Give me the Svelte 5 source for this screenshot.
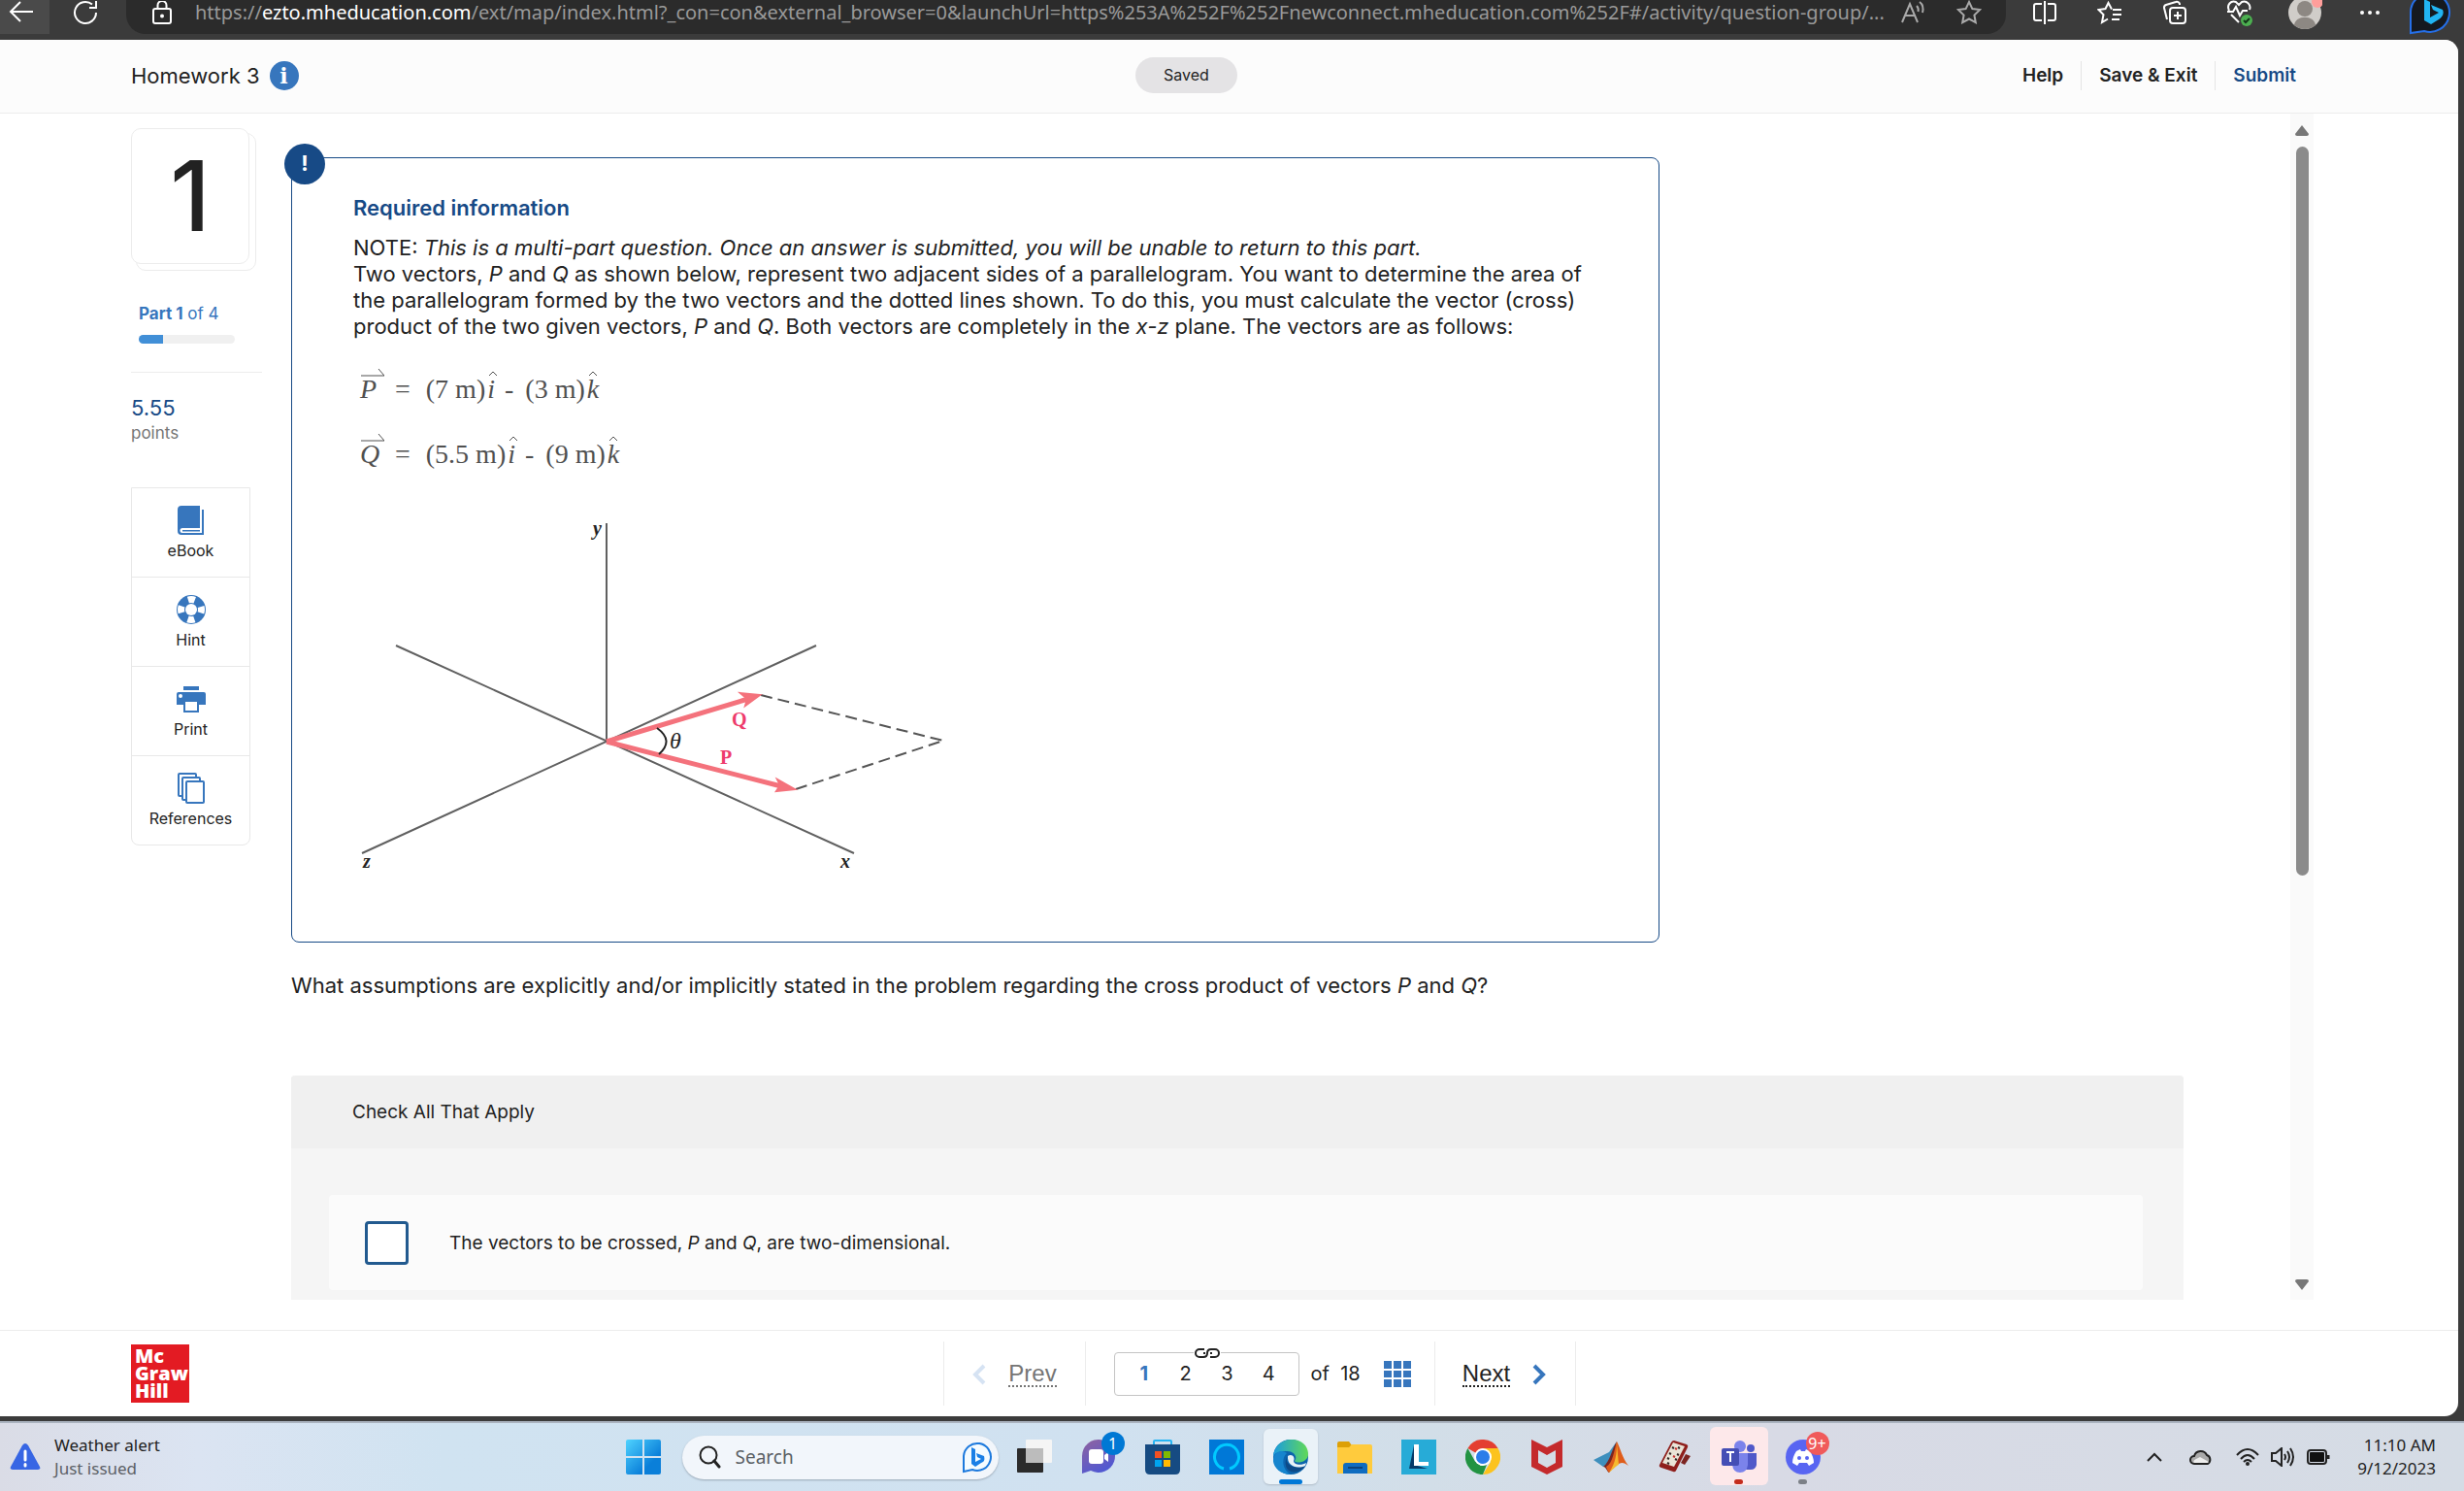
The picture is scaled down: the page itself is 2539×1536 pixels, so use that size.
<script>
    let answerChecked = $state(false);
    let search = $state('');
    let currentPage = $state(1);

    const pages = [1, 2, 3, 4];
    const progress = 25;
</script>

<div class="screen">
    <header class="browser-bar">
        <button class="nav-btn back" aria-label="Back">
            <svg width="26" height="24" viewBox="0 0 26 24"><path d="M25 12H2M12 2 2 12l10 10" /></svg>
        </button>
        <button class="nav-btn" aria-label="Refresh">
            <svg width="26" height="26" viewBox="0 0 26 26"><path d="M24 13A11 11 0 1 1 20 4.500M24 1v7h-7" /></svg>
        </button>
        <div class="address">
            <svg class="lock" width="20" height="24" viewBox="0 0 20 24"><rect x="1" y="8" width="18" height="15" rx="2" /><path d="M5.500 8V4.500a4.500 4.500 0 0 1 9 0V8" /><circle class="dot" cx="10" cy="15.500" r="2" /></svg>
            <a class="url" href="#top">https://<b>ezto.mheducation.com</b>/ext/map/index.html?_con=con&amp;external_browser=0&amp;launchUrl=https%253A%252F%252Fnewconnect.mheducation.com%252F#/activity/question-group/...</a>
            <button class="address-btn" aria-label="Read aloud">
                <svg width="26" height="24" viewBox="0 0 26 24"><path d="m2 22 8-19 8 19M5 15h10M17 5c2 2 2 4 1.500 6M20 1c4 3 4 7 3 11" /></svg>
            </button>
            <button class="address-btn" aria-label="Favorite">
                <svg width="26" height="25" viewBox="0 0 26 25"><path d="m13 2 3.400 7.100 7.600 1-5.600 5.400 1.400 7.700-6.800-3.700-6.800 3.700 1.400-7.700L2 10.100l7.600-1z" /></svg>
            </button>
        </div>
        <div class="browser-tools">
            <button aria-label="Split screen"><svg width="26" height="26" viewBox="0 0 26 26"><path d="M10 4H4a2 2 0 0 0-2 2v13a2 2 0 0 0 2 2h6M16 4h6a2 2 0 0 1 2 2v13a2 2 0 0 1-2 2h-6M13 1v24" /></svg></button>
            <button aria-label="Favorites"><svg width="26" height="26" viewBox="0 0 26 26"><path d="M15 9.500 11.500 3 8.500 9l-7 1 5 5-1.500 8 6-3.500M16 10h9M16 15h9M15 20h8" /></svg></button>
            <button aria-label="Collections"><svg width="26" height="26" viewBox="0 0 26 26"><rect x="8" y="8" width="16" height="16" rx="3" /><path d="M5 20 2 8a3 3 0 0 1 2-3l10-3a3 3 0 0 1 4 2v1M16 12v8M12 16h8" /></svg></button>
            <button aria-label="Browser essentials"><svg width="28" height="28" viewBox="0 0 28 28"><path d="M3 12C0 6 5 1 10 3l3 3 3-3c5-2 10 3 8 8M1 13h6l3-5 4 9 3-5h5M5 16l8 8" /><circle cx="21" cy="22" r="6" fill="#4caf50" stroke="none" /><path d="m18 22 2 2 4-4" stroke="#14351a" /></svg></button>
            <button aria-label="Profile"><svg width="36" height="36" viewBox="0 0 36 36"><circle cx="18" cy="18" r="17" fill="#d0cdc9" stroke="none" /><circle cx="18" cy="14" r="8" fill="#8d8883" stroke="none" /><path d="M7 31c1-11 21-11 22 0a17 17 0 0 1-22 0" fill="#8d8883" stroke="none" /><circle cx="31" cy="7" r="6" fill="#ff9e9b" stroke="none" /></svg></button>
            <button aria-label="More"><svg width="24" height="8" viewBox="0 0 24 8"><g fill="#fff" stroke="none"><circle cx="4" cy="4" r="2" /><circle cx="12" cy="4" r="2" /><circle cx="20" cy="4" r="2" /></g></svg></button>
            <button aria-label="Bing chat">
                <svg width="46" height="46" viewBox="0 0 46 46"><path d="M3 44V22a20 20 0 1 1 14 20z" fill="#15191f" stroke="#256fe8" /><path d="M17 9l6 3v16l9-5-6-3-2-5 12 5c2 5-1 8-4 10l-8 5-7-4z" fill="#21b4f2" stroke="none" /></svg>
            </button>
        </div>
    </header>

    <div class="page">
        <header class="assignment-bar">
            <div class="assignment-title">
                Homework 3
                <button class="info" aria-label="Assignment information">i</button>
            </div>
            <span class="saved">Saved</span>
            <nav class="actions">
                <a href="#help">Help</a>
                <a href="#save">Save &amp; Exit</a>
                <a class="submit" href="#submit">Submit</a>
            </nav>
        </header>

        <div class="workspace">
            <aside class="sidebar">
                <div class="stack"><div class="number">1</div></div>
                <div class="part">
                    <div class="part-label"><b>Part 1</b> of 4</div>
                    <div class="track"><div class="fill" style="width: {progress}%"></div></div>
                </div>
                <div class="points">
                    <strong>5.55</strong>
                    <span>points</span>
                </div>
                <div class="tools">
                    <button>
                        <svg width="30" height="32" viewBox="0 0 30 32"><path d="M5 1h19v23H6a2 2 0 0 0 0 5h20V5h2v26H5a4 4 0 0 1-4-4V5a4 4 0 0 1 4-4" /><path d="M6 26h18v1.500H6z" /></svg>
                        eBook
                    </button>
                    <button>
                        <svg width="32" height="32" viewBox="0 0 32 32"><circle cx="16" cy="16" r="15" /><circle cx="16" cy="16" r="10.500" fill="none" stroke="#fff" stroke-width="7" stroke-dasharray="7 9.490" stroke-dashoffset="3.500" /><circle cx="16" cy="16" r="6" fill="#fff" /></svg>
                        Hint
                    </button>
                    <button>
                        <svg width="32" height="32" viewBox="0 0 32 32"><path d="M8 3h16v4H8zM3 9h26a2 2 0 0 1 2 2v11h-7v8H8v-8H1V11a2 2 0 0 1 2-2" /><path d="M10 19h12v9H10z" fill="#fff" /><circle cx="5" cy="13" r="2" fill="#fff" /></svg>
                        Print
                    </button>
                    <button>
                        <svg width="30" height="32" viewBox="0 0 30 32"><g fill="#fff" stroke="#3776bd" stroke-width="2"><rect x="2" y="1" width="18" height="23" rx="1" /><rect x="6" y="5" width="18" height="23" rx="1" /><rect x="10" y="9" width="18" height="22" rx="1" /></g></svg>
                        References
                    </button>
                </div>
            </aside>

            <main class="content">
                <section class="required">
                    <span class="alert">!</span>
                    <h2>Required information</h2>
                    <p>
                        NOTE: <i>This is a multi-part question. Once an answer is submitted, you will be unable to return to this part.</i><br />
                        Two vectors, <i>P</i> and <i>Q</i> as shown below, represent two adjacent sides of a parallelogram. You want to determine the area of<br />
                        the parallelogram formed by the two vectors and the dotted lines shown. To do this, you must calculate the vector (cross)<br />
                        product of the two given vectors, <i>P</i> and <i>Q</i>. Both vectors are completely in the <i>x-z</i> plane. The vectors are as follows:
                    </p>

                    {#snippet vector(name)}
                        <span class="vector"><svg width="24" height="9" viewBox="0 0 24 9"><path d="M0 8h24l-6-7" /></svg><i>{name}</i></span>
                    {/snippet}
                    {#snippet unit(name)}
                        <span class="unit"><svg width="10" height="6" viewBox="0 0 10 6"><path d="m1 5 4-4 4 4" /></svg><i>{name}</i></span>
                    {/snippet}

                    <div class="formula">
                        {@render vector('P')}<span class="equals">=</span><span>(7 m)</span>{@render unit('i')}<span class="minus">-</span><span>(3 m)</span>{@render unit('k')}
                    </div>
                    <div class="formula">
                        {@render vector('Q')}<span class="equals">=</span><span>(5.5 m)</span>{@render unit('i')}<span class="minus">-</span><span>(9 m)</span>{@render unit('k')}
                    </div>

                    <svg class="diagram" width="640" height="380" viewBox="0 0 640 380" role="img" aria-label="Vectors P and Q in the x-z plane">
                        <g class="axes">
                            <path d="M261 15v225M44 141l472 214M477 141 9 355" />
                        </g>
                        <g class="dashed">
                            <path d="m420 192 188 47" />
                            <path d="m456 289 152-50" />
                        </g>
                        <g class="vectors">
                            <path d="m261 240 146-44M261 240l180 46" />
                        </g>
                        <g class="heads">
                            <path d="m419 192-20-2 7 6-2 7zM455 289l-18-10 3 6-4 6z" />
                        </g>
                        <path class="arc" d="M313 226q18 13 2 27" />
                        <g class="axis-names">
                            <text x="247" y="27">y</text>
                            <text x="10" y="370">z</text>
                            <text x="502" y="370">x</text>
                        </g>
                        <g class="vector-names">
                            <text x="390" y="224">Q</text>
                            <text x="378" y="263">P</text>
                        </g>
                        <text class="theta" x="326" y="247">θ</text>
                    </svg>
                </section>

                <p class="question">What assumptions are explicitly and/or implicitly stated in the problem regarding the cross product of vectors <i>P</i> and <i>Q</i>?</p>

                <section class="answers">
                    <h3>Check All That Apply</h3>
                    <div class="options">
                        <label>
                            <input type="checkbox" bind:checked={answerChecked} />
                            <span>The vectors to be crossed, <i>P</i> and <i>Q</i>, are two-dimensional.</span>
                        </label>
                    </div>
                </section>
            </main>

            <div class="scrollbar">
                <button aria-label="Scroll up"><svg width="14" height="11" viewBox="0 0 14 11"><path d="M7 0 14 9q0 2-2 2H2q-2 0-2-2z" /></svg></button>
                <div class="rail"><div class="thumb"></div></div>
                <button aria-label="Scroll down"><svg width="14" height="11" viewBox="0 0 14 11"><path d="M7 11 14 2q0-2-2-2H2Q0 0 0 2z" /></svg></button>
            </div>
        </div>

        <footer class="pager">
            <div class="logo">Mc<br />Graw<br />Hill</div>
            <nav class="pager-nav">
                <a class="step prev" href="#prev">
                    <svg width="16" height="22" viewBox="0 0 16 22"><path d="m13 2-9 9 9 9" /></svg>
                    <span>Prev</span>
                </a>
                <div class="pages">
                    <div class="page-group">
                        <svg class="link" width="28" height="12" viewBox="0 0 28 12"><path d="M11 2H6a4 4 0 0 0 0 8h4q4 0 4-4t4-4h4a4 4 0 0 1 0 8h-5M10 6h2M17 6h2" /></svg>
                        {#each pages as page}
                            <button class:current={page === currentPage} onclick={() => (currentPage = page)}>{page}</button>
                        {/each}
                    </div>
                    <span class="total">of &nbsp;18</span>
                    <button class="grid-btn" aria-label="All questions">
                        <svg width="28" height="27" viewBox="0 0 28 27"><path d="M0 0h8v8H0zM10 0h8v8h-8zM20 0h8v8h-8zM0 10h8v7H0zM10 10h8v7h-8zM20 10h8v7h-8zM0 19h8v8H0zM10 19h8v8h-8zM20 19h8v8h-8z" /></svg>
                    </button>
                </div>
                <a class="step next" href="#next">
                    <span>Next</span>
                    <svg width="16" height="22" viewBox="0 0 16 22"><path d="m3 2 9 9-9 9" /></svg>
                </a>
            </nav>
        </footer>
    </div>

    <footer class="taskbar">
        <button class="weather">
            <svg width="32" height="30" viewBox="0 0 32 30"><path d="M13 3q3-4 6 0l12 22q1 3-2 3H3q-3 0-2-3z" fill="#3766e4" /><path d="M16 9v9M16 22.500v1.500" stroke="#fff" stroke-width="3" stroke-linecap="round" /></svg>
            <span class="weather-text"><span>Weather alert</span><small>Just issued</small></span>
        </button>

        <div class="apps">
            <button class="app" aria-label="Start">
                <svg width="36" height="36" viewBox="0 0 36 36"><defs><linearGradient id="win" x2="1" y2="1"><stop stop-color="#4fd3ff" /><stop offset="0.700" stop-color="#0a7fd9" /></linearGradient></defs><path d="M0 2q0-2 2-2h15v17H0zM19 0h15q2 0 2 2v15H19zM0 19h17v17H2q-2 0-2-2zM19 19h17v15q0 2-2 2H19z" fill="url(#win)" /></svg>
            </button>
            <label class="search">
                <svg width="24" height="24" viewBox="0 0 24 24"><circle cx="11" cy="10" r="8.500" fill="none" stroke="#222" stroke-width="2" /><path d="m17 16 5 6" stroke="#222" stroke-width="3" stroke-linecap="round" /></svg>
                <input type="text" aria-label="Search" placeholder="Search" bind:value={search} />
                <svg width="32" height="38" viewBox="0 0 32 38"><path d="M2 34V18a14 14 0 1 1 9 14z" fill="#f4fbff" stroke="#1c79dd" stroke-width="2" /><path d="m10 9 4 2v13l6-3-4-2-1-4 8 3c1 4 0 6-3 7l-6 4-4-3z" fill="#1a7fe6" /></svg>
            </label>
            <button class="app" aria-label="Task view">
                <svg width="36" height="36" viewBox="0 0 36 36"><rect y="9" width="27" height="25" rx="1" fill="#2b2b2b" /><rect x="9" width="27" height="24" rx="1" fill="#f5f5f5" /><path d="M9 9h18v15H9z" fill="#bcbcbc" /></svg>
            </button>
            <button class="app" aria-label="Chat, 1 new">
                <svg width="36" height="36" viewBox="0 0 36 36"><defs><linearGradient id="chat" y2="1" x2="0.500"><stop stop-color="#91639f" /><stop offset="1" stop-color="#5058d2" /></linearGradient></defs><path d="M1 35V17a17 17 0 1 1 9 15z" fill="url(#chat)" /><rect x="8" y="10" width="15" height="15" rx="3" fill="#fff" /><path d="m24 16 4-3v10l-4-3z" fill="#fff" /></svg>
                <span class="badge blue">1</span>
            </button>
            <button class="app" aria-label="Store">
                <svg width="36" height="36" viewBox="0 0 36 36"><path d="M9 6V2q0-1 1-1h16q1 0 1 1v4" fill="none" stroke="#26b5f5" stroke-width="2" /><path d="M0 5h36v26q0 5-5 5H5q-5 0-5-5z" fill="#164b82" /><path d="M10 12h7v7h-7z" fill="#f25022" /><path d="M19 12h7v7h-7z" fill="#7fba00" /><path d="M10 21h7v7h-7z" fill="#00a4ef" /><path d="M19 21h7v7h-7z" fill="#ffb900" /></svg>
            </button>
            <button class="app" aria-label="Alexa">
                <svg width="36" height="36" viewBox="0 0 36 36"><path d="M0 0h36v36H0z" fill="#0078d7" /><path d="M15 30a12.500 12.500 0 1 1 6 0" fill="none" stroke="#00caff" stroke-width="3" /></svg>
            </button>
            <button class="app" aria-label="Microsoft Edge">
                <span class="tile"></span>
                <svg width="36" height="36" viewBox="0 0 36 36"><defs><linearGradient id="edge" x2="1"><stop stop-color="#199be0" /><stop offset="1" stop-color="#62d957" /></linearGradient></defs><circle cx="18" cy="18" r="18" fill="#0c64ad" /><path d="M0 18C1-6 36-5 36 15c0 9-13 10-14 7 4-5-2-11-9-10-7 0-12 2-13 6" fill="url(#edge)" /><path d="M14 14c-5 4-6 16 4 22C5 36-3 25 1 17c3-6 9-6 13-3" fill="#1685ce" /><path d="M14 18c-2 8 7 13 19 9-5 8-18 9-20 0-1-4 0-7 1-9" fill="#0d4a87" /><path d="M15 17c4-3 8 1 6 5 0 4 8 5 13 2l-1 3c-9 4-19 0-18-10" fill="#e9f2f7" /></svg>
                <span class="mark active"></span>
            </button>
            <button class="app" aria-label="File Explorer">
                <svg width="36" height="36" viewBox="0 0 36 36"><path d="M0 4q0-2 2-2h10l3 4h15v9H0z" fill="#dda007" /><path d="M0 8h12l3-3h19q2 0 2 2v28H0z" fill="#ffcb3d" /><path d="M6 35V27q0-3 3-3h19q3 0 3 3v8z" fill="#0f6cc0" /><path d="M11 29h15" stroke="#0a437c" stroke-width="2" /></svg>
            </button>
            <button class="app" aria-label="LockDown Browser">
                <svg width="36" height="36" viewBox="0 0 36 36"><path d="M0 0h36v36H0z" fill="#27abd7" /><path d="m13 6-5 24h19l-14-4z" fill="#063a68" /><path d="M13 5h5v18h10v4H13z" fill="#fff" /></svg>
            </button>
            <button class="app" aria-label="Google Chrome">
                <svg width="36" height="36" viewBox="0 0 36 36"><path d="M18 18 2.400 9A18 18 0 0 1 33.600 9z" fill="#e43e31" /><path d="M18 9h15.600A18 18 0 0 1 18 36l8-13z" fill="#fcc31e" /><path d="M2.400 9 10 22.500 16 27l6-1-4 10A18 18 0 0 1 2.400 9" fill="#229342" /><circle cx="18" cy="18" r="9" fill="#fff" /><circle cx="18" cy="18" r="7" fill="#2b7de9" /></svg>
            </button>
            <button class="app" aria-label="McAfee">
                <svg width="32" height="36" viewBox="0 0 32 36"><path d="m0 0 16 8L32 0v28l-16 8-16-8zM7 11v13l9 5 9-5V11l-9 5z" fill="#c42a2c" fill-rule="evenodd" /></svg>
            </button>
            <button class="app" aria-label="MATLAB">
                <svg width="36" height="36" viewBox="0 0 36 36"><path d="m0 21 10-5 6-3L24 2l-9 24-5 2z" fill="#3e8fbd" /><path d="M24 2c-5 7-7 21-14 26 3 0 4 5 6 6C24 26 22 10 24 2" fill="#7a2621" /><path d="M24 2c3 5 6 18 12 25-7-6-11-3-20 7-2-2-2-4-3-6 7-4 8-16 11-26" fill="#df5d1b" /><path d="M24 4c0 10-1 20-8 30 3-2 7-7 10-8z" fill="#f6b92d" /></svg>
            </button>
            <button class="app" aria-label="Solitaire">
                <svg width="36" height="36" viewBox="0 0 36 36"><path d="m17 1 13 4q2 1 1 3L19 32q-1 2-3 1L4 29q-3-1-2-3L14 3q1-2 3-2" fill="#8f1f1c" /><path d="m16 3 12 4-11 21-12-4z" fill="#eae4d7" /><path d="m15 8 2 1m4-1 2 1m-11 5 2 1m6 0 2 1m-12 3 2 1m6 0 2 1m-10 3 2 1" stroke="#322523" stroke-width="2" /><path d="m18 9 2 1m-4 7 2 1" stroke="#c93230" stroke-width="2" /><path d="m29 15 5 2-6 9-4-2z" fill="#7c2421" /></svg>
            </button>
            <button class="app" aria-label="Microsoft Teams">
                <span class="tile teams"></span>
                <svg width="36" height="36" viewBox="0 0 36 36"><circle cx="19" cy="7" r="6" fill="#7b83eb" /><circle cx="30" cy="9" r="4" fill="#5059c9" /><path d="M25 14h11v12q-1 5-6 5h-5z" fill="#5059c9" /><path d="M11 14h16v12q-1 8-8 8t-8-8z" fill="#7b83eb" /><rect y="9" width="18" height="18" rx="2" fill="#444eb5" /><path d="M5 13h8M9 13v10" stroke="#fff" stroke-width="2" /></svg>
                <span class="mark red"></span>
            </button>
            <button class="app" aria-label="Discord, 9+ new">
                <svg width="36" height="36" viewBox="0 0 36 36"><circle cx="18" cy="18" r="18" fill="#5865f2" /><path d="m11 12 4-2 1 2h4l1-2 4 2q4 6 4 12l-5 3-2-3h-8l-2 3-5-3q0-6 4-12" fill="#fff" /><circle cx="14" cy="19" r="2" fill="#5865f2" /><circle cx="22" cy="19" r="2" fill="#5865f2" /></svg>
                <span class="badge coral">9+</span>
                <span class="mark"></span>
            </button>
        </div>

        <div class="tray">
            <button aria-label="Show hidden icons"><svg width="16" height="10" viewBox="0 0 16 10"><path d="m1 9 7-7 7 7" /></svg></button>
            <button aria-label="OneDrive"><svg width="24" height="18" viewBox="0 0 24 18"><path d="M5 16a4 4 0 0 1 0-8 7 7 0 0 1 13-1 5 5 0 0 1 1 9z" fill="#aaa" /><path d="M5 15q-2-2 2-4l4-2 9 5-1 1z" fill="#eee" stroke="none" /></svg></button>
            <button class="status" aria-label="Network, sound and battery">
                <svg width="24" height="20" viewBox="0 0 24 20"><path d="M1 8q11-12 22 0M5 12q7-8 14 0M8 15q4-4 8 0" /><circle cx="12" cy="17" r="2" fill="#222" stroke="none" /></svg>
                <svg width="25" height="20" viewBox="0 0 25 20"><path d="M1 6h4l6-5v18l-6-5H1zM14 7q2 3 0 6M17 4q4 6 0 12M20 1q6 9 0 18" /></svg>
                <svg width="24" height="16" viewBox="0 0 24 16"><rect x="1" y="1" width="19" height="14" rx="3" /><rect x="3" y="3" width="15" height="10" rx="1" fill="#111" stroke="none" /><path d="M22 6v4" stroke-width="3" /></svg>
            </button>
            <button class="clock"><span>11:10 AM</span><span>9/12/2023</span></button>
        </div>
    </footer>
</div>

<style>
    :global(body) {
        background: #3b3b3b;
    }

    * {
        box-sizing: border-box;
    }

    button {
        font: inherit;
        color: inherit;
        background: none;
        border: none;
        padding: 0;
        cursor: pointer;
    }

    a {
        color: inherit;
        text-decoration: none;
    }

    svg {
        display: block;
        flex: none;
    }

    .screen {
        display: flex;
        flex-direction: column;
        min-height: 100vh;
        color: #222;
        font-family: Inter, "Open Sans", sans-serif;
        font-size: 22px;
    }

    /* browser */
    .browser-bar {
        display: flex;
        height: 41px;
        padding-bottom: 6px;
        background: #3b3b3b;
        overflow: hidden;
    }

    .browser-bar svg {
        fill: none;
        stroke: #fff;
        stroke-width: 2;
    }

    .nav-btn {
        display: flex;
        justify-content: center;
        width: 73px;
    }

    .nav-btn.back {
        width: 51px;
        background: #4a4a4a;
        padding-right: 8px;
    }

    .address {
        flex: 1;
        min-width: 0;
        display: flex;
        align-items: center;
        margin-left: 6px;
        padding: 0 9px 10px 27px;
        background: #2b2b2b;
        border-radius: 0 0 20px 20px;
    }

    .address .dot {
        fill: #fff;
        stroke: none;
    }

    .url {
        flex: 1;
        min-width: 0;
        margin-left: 24px;
        overflow: hidden;
        white-space: nowrap;
        color: #999;
        font-family: "Noto Sans", sans-serif;
        font-size: 20px;
        line-height: 26px;
    }

    .url b {
        color: #fff;
        font-weight: 400;
    }

    .address-btn {
        display: flex;
        justify-content: center;
        width: 58px;
    }

    .address-btn svg {
        stroke: #aaa;
    }

    .browser-tools {
        display: flex;
        align-items: center;
        margin-bottom: 10px;
        padding-left: 6px;
    }

    .browser-tools button {
        display: flex;
        align-items: center;
        justify-content: center;
        width: 67px;
        height: 26px;
    }

    .browser-tools button:last-child {
        width: 64px;
        padding-right: 6px;
    }

    /* page */
    .page {
        flex: 1;
        display: flex;
        flex-direction: column;
        margin-right: 6px;
        background: #fff;
        border-radius: 0 14px 14px 0;
        overflow: hidden;
    }

    .assignment-bar {
        display: grid;
        grid-template-columns: 1035fr 105px 1091fr;
        align-items: center;
        height: 76px;
        padding: 0 167px 2px 135px;
        background: #fcfcfc;
        border-bottom: 1px solid #ececec;
    }

    .assignment-title {
        display: flex;
        align-items: center;
        gap: 10px;
    }

    .info {
        width: 30px;
        height: 30px;
        border-radius: 50%;
        background: #3776bd;
        color: #fff;
        font-family: "DejaVu Serif", serif;
        font-size: 22px;
        font-weight: 700;
        line-height: 28px;
    }

    .saved {
        height: 37px;
        border-radius: 19px;
        background: #e4e3e5;
        font-size: 16px;
        line-height: 36px;
        text-align: center;
    }

    .actions {
        display: flex;
        justify-content: flex-end;
        font-size: 19px;
        font-weight: 600;
        line-height: 30px;
    }

    .actions a {
        padding: 0 18px;
        border-left: 1px solid #e5e5e5;
    }

    .actions a:first-child {
        border-left: none;
    }

    .actions a:last-child {
        padding-right: 0;
    }

    .submit {
        color: #174a86;
    }

    .workspace {
        flex: 1;
        display: flex;
        padding: 0 149px 31px 135px;
    }

    /* sidebar */
    .sidebar {
        width: 165px;
        padding-top: 15px;
    }

    .stack {
        position: relative;
        width: 122px;
        height: 140px;
    }

    .stack::before {
        content: "";
        position: absolute;
        inset: 5px -7px -7px 5px;
        border: 1px solid #ececec;
        border-radius: 10px;
    }

    .number {
        position: relative;
        height: 100%;
        border: 1px solid #ececec;
        border-radius: 10px;
        background: #fff;
        font-size: 100px;
        font-weight: 500;
        line-height: 138px;
        text-align: center;
    }

    .part {
        width: 135px;
        padding: 38px 28px 29px 8px;
        border-bottom: 1px solid #ececec;
        color: #3776bd;
        white-space: nowrap;
    }

    .part-label {
        font-size: 17px;
        line-height: 26px;
    }

    .track {
        height: 9px;
        margin-top: 9px;
        border-radius: 5px;
        background: #f0f0f0;
        overflow: hidden;
    }

    .fill {
        height: 100%;
        background: #418fd7;
    }

    .points {
        display: flex;
        flex-direction: column;
        margin-top: 23px;
        line-height: 26px;
    }

    .points strong {
        color: #174a86;
        font-weight: 400;
    }

    .points span {
        color: #757575;
        font-size: 17px;
    }

    .tools {
        width: 123px;
        margin-top: 43px;
        border: 1px solid #e8e8e8;
        border-radius: 0 0 8px 8px;
    }

    .tools button {
        display: flex;
        flex-direction: column;
        align-items: center;
        gap: 4px;
        width: 100%;
        height: 92px;
        padding-top: 17px;
        border-bottom: 1px solid #e8e8e8;
        font-size: 16px;
        line-height: 22px;
    }

    .tools button:last-child {
        border-bottom: none;
        height: 91px;
    }

    .tools svg {
        fill: #3776bd;
    }

    /* question */
    .content {
        flex: 1;
        min-width: 0;
        padding-top: 45px;
    }

    .required {
        position: relative;
        max-width: 1410px;
        padding: 38px 63px 66px;
        border: 1px solid #174a86;
        border-radius: 8px;
    }

    .alert {
        position: absolute;
        top: -15px;
        left: -8px;
        width: 42px;
        height: 42px;
        border-radius: 50%;
        background: #174a86;
        color: #fff;
        font-weight: 700;
        line-height: 41px;
        text-align: center;
    }

    h2 {
        margin: 0;
        color: #174a86;
        font-size: 22px;
        font-weight: 600;
        line-height: 26px;
    }

    p {
        margin: 15px 0 17px;
        line-height: 27px;
        white-space: nowrap;
    }

    .formula {
        display: flex;
        align-items: center;
        height: 67px;
        padding-left: 7px;
        color: #505050;
        font-family: "Liberation Serif", serif;
        font-size: 28px;
        line-height: 32px;
    }

    .formula svg {
        position: absolute;
        left: 1px;
        fill: none;
        stroke: #505050;
    }

    .vector,
    .unit {
        position: relative;
    }

    .vector {
        min-width: 22px;
    }

    .vector svg {
        top: -6px;
    }

    .unit {
        margin-left: 2px;
    }

    .unit svg {
        top: -3px;
    }

    .equals {
        margin: 0 16px 0 14px;
    }

    .minus {
        margin: 0 12px 0 10px;
    }

    .diagram {
        margin-top: 23px;
        fill: none;
        font-family: "Liberation Serif", serif;
        font-size: 20px;
        font-weight: 700;
    }

    .axes {
        stroke: #606060;
        stroke-width: 2;
    }

    .dashed {
        stroke: #555;
        stroke-width: 2;
        stroke-dasharray: 12 6;
    }

    .vectors {
        stroke: #f4727c;
        stroke-width: 5;
    }

    .heads {
        fill: #f4727c;
        stroke: #f4727c;
        stroke-width: 2;
    }

    .arc {
        stroke: #222;
        stroke-width: 2;
    }

    .axis-names,
    .theta {
        fill: #222;
        font-style: italic;
    }

    .theta {
        font-size: 24px;
        font-weight: 400;
    }

    .vector-names {
        fill: #ee3b6c;
    }

    .question {
        margin: 31px 0 79px;
    }

    .answers {
        background: #f5f5f5;
        border-radius: 4px 4px 0 0;
        margin-right: 110px;
        overflow: hidden;
        font-size: 19px;
    }

    h3 {
        margin: 0;
        padding-left: 63px;
        background: #f0f0f0;
        font-size: 19px;
        font-weight: 400;
        line-height: 75px;
    }

    .options {
        padding: 48px 42px 10px 39px;
    }

    .options label {
        display: flex;
        align-items: center;
        gap: 42px;
        height: 98px;
        padding-left: 37px;
        background: #fbfbfb;
        border-radius: 4px;
    }

    .options input {
        appearance: none;
        width: 45px;
        height: 45px;
        margin: 0;
        border: 3px solid #225a8f;
        border-radius: 4px;
        background: #fff;
    }

    .options input:checked {
        background: #225a8f;
    }

    .scrollbar {
        display: flex;
        flex-direction: column;
        align-items: center;
        width: 24px;
        padding: 12px 0 10px;
        background: #fafafa;
    }

    .scrollbar svg {
        fill: #777;
    }

    .rail {
        flex: 1;
        width: 13px;
        padding: 11px 0;
    }

    .thumb {
        height: 65%;
        border-radius: 7px;
        background: #8b8b8b;
    }

    /* pager */
    .pager {
        display: grid;
        grid-template-columns: 837fr auto 910fr;
        align-items: center;
        height: 89px;
        padding-left: 135px;
        border-top: 1px solid #ececec;
    }

    .logo {
        width: 60px;
        height: 60px;
        padding: 3px 4px;
        background: #e31b23;
        color: #fff;
        font-family: "Open Sans", sans-serif;
        font-size: 20px;
        font-weight: 800;
        line-height: 18px;
    }

    .pager-nav {
        display: flex;
        height: 66px;
    }

    .step,
    .pages {
        display: flex;
        align-items: center;
        border-left: 1px solid #ececec;
    }

    .step {
        justify-content: center;
        gap: 22px;
        width: 146px;
        padding-top: 2px;
        font-family: "Liberation Sans", sans-serif;
        font-size: 24px;
    }

    .step span {
        border-bottom: 2px dotted currentColor;
        line-height: 24px;
    }

    .step svg {
        fill: none;
        stroke: #3776bd;
        stroke-width: 4;
    }

    .prev {
        color: #757575;
    }

    .prev svg {
        stroke: #d6e3f3;
    }

    .next {
        border-right: 1px solid #ececec;
    }

    .pages {
        width: 360px;
        padding-left: 29px;
        font-size: 20px;
    }

    .page-group {
        position: relative;
        display: flex;
        width: 191px;
        height: 45px;
        padding: 0 9px;
        border: 1px solid #c4c4c4;
        border-radius: 4px;
    }

    .page-group button {
        flex: 1;
    }

    .page-group .current {
        color: #3776bd;
        font-weight: 700;
    }

    .link {
        position: absolute;
        top: -6px;
        left: 81px;
        background: #fff;
        fill: none;
        stroke: #222;
        stroke-width: 2;
    }

    .total {
        margin: 0 24px 0 12px;
        white-space: nowrap;
    }

    .grid-btn svg {
        fill: #3776bd;
    }

    /* taskbar */
    .taskbar {
        display: grid;
        grid-template-columns: 1fr auto 1fr;
        align-items: center;
        height: 72px;
        margin-top: 5px;
        border-top: 2px solid #aab3bf;
        background: linear-gradient(90deg, #dadce6 0%, #dbe4f2 8%, #d0e3f1 18%, #d0e1f0 45%, #d2dee8 58%, #d8dae5 72%, #d5dce5 100%);
        font-family: "Noto Sans", sans-serif;
        font-size: 17px;
        line-height: 24px;
    }

    .weather {
        display: flex;
        align-items: center;
        gap: 14px;
        padding-left: 10px;
        text-align: left;
    }

    .weather-text {
        display: flex;
        flex-direction: column;
    }

    .weather small {
        color: #5c6066;
        font-size: 17px;
    }

    .apps {
        display: flex;
        align-items: center;
        padding-right: 19px;
    }

    .app {
        position: relative;
        display: flex;
        align-items: center;
        justify-content: center;
        width: 66px;
        height: 70px;
    }

    .app svg {
        position: relative;
    }

    .tile {
        position: absolute;
        inset: 6px 5px 7px;
        border-radius: 6px;
        background: #eaf2f8;
        box-shadow: 0 1px 2px #b0bcc8;
    }

    .tile.teams {
        inset: 4px 3px 6px;
        background: #fde8ea;
        box-shadow: none;
    }

    .mark {
        position: absolute;
        bottom: 7px;
        width: 9px;
        height: 5px;
        border-radius: 3px;
        background: #7c8087;
    }

    .mark.active {
        width: 24px;
        background: #0078d7;
    }

    .mark.red {
        background: #c42b1c;
    }

    .badge {
        position: absolute;
        top: 9px;
        right: 6px;
        min-width: 24px;
        height: 24px;
        border-radius: 12px;
        color: #fff;
        font-size: 16px;
    }

    .badge.blue {
        background: #0078d4;
    }

    .badge.coral {
        background: #f05a5b;
    }

    .search {
        display: flex;
        align-items: center;
        width: 326px;
        height: 45px;
        margin: 0 4px 0 7px;
        padding: 0 6px 0 16px;
        border-radius: 23px;
        background: #f2f6fb;
        box-shadow: 0 1px 2px #9aa8b6;
    }

    .search input {
        flex: 1;
        min-width: 0;
        margin-left: 13px;
        border: none;
        outline: none;
        background: none;
        font: inherit;
        font-size: 19px;
    }

    .search input::placeholder {
        color: #5a5f64;
        opacity: 1;
    }

    .tray {
        display: flex;
        align-items: center;
        justify-content: flex-end;
        gap: 28px;
        padding-right: 29px;
    }

    .tray svg {
        fill: none;
        stroke: #222;
        stroke-width: 2;
    }

    .status {
        display: flex;
        align-items: center;
        gap: 12px;
        margin-left: -4px;
    }

    .clock {
        display: flex;
        flex-direction: column;
        align-items: flex-end;
        font-size: 17px;
        white-space: nowrap;
    }
</style>
